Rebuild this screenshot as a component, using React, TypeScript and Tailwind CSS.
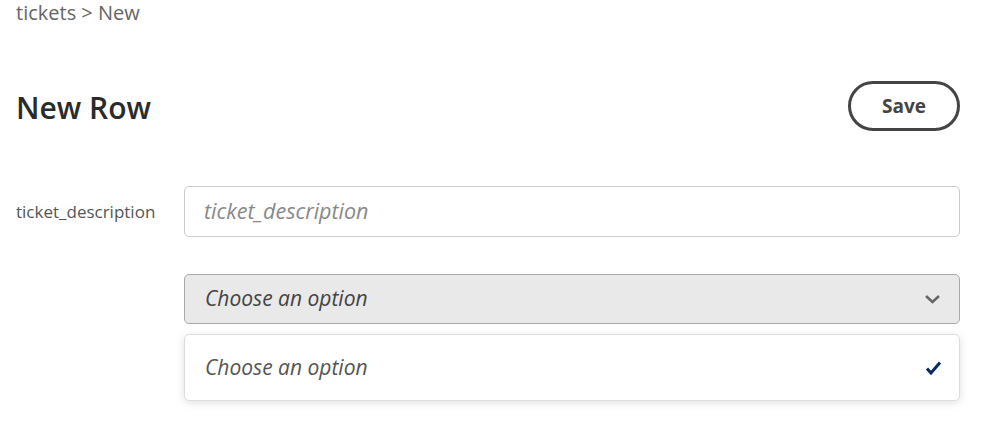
import React from "react";

export default function App() {
  return (
    <div className="w-[986px] h-[432px] bg-white overflow-hidden" style={{ fontFamily: "'Open Sans', sans-serif" }}>
      <div className="pl-4 pr-[26px]">
        <div className="text-[20px] leading-[26px] text-[#666]">tickets &gt; New</div>
        <div className="mt-[55px] flex items-center justify-between h-[50px]">
          <h1 className="pt-[4px] text-[30px] font-semibold text-[#2b2b2b] leading-none">New Row</h1>
          <button className="w-[112px] h-[50px] rounded-full border-[3px] border-[#444] text-[19px] font-bold text-[#444]">Save</button>
        </div>
        <div className="mt-[55px] flex items-center">
          <label className="w-[168px] text-[17px] text-[#555]">ticket_description</label>
          <div className="flex-1 h-[51px] border border-[#ccc] rounded-[5px] flex items-center px-[19px]">
            <span className="italic text-[21.5px] text-[#888]">ticket_description</span>
          </div>
        </div>
        <div className="mt-[37px] ml-[168px] h-[50px] bg-[#e9e9e9] border border-[#aaa] rounded-[5px] flex items-center justify-between pl-[20px] pr-[18px]">
          <span className="italic text-[21px] text-[#444]">Choose an option</span>
          <svg width="17" height="10" viewBox="0 0 17 10" fill="none">
            <path d="M2 2l6.5 6 6.5-6" stroke="#666" strokeWidth="2.5" />
          </svg>
        </div>
        <div className="mt-[10px] ml-[168px] h-[67px] bg-white border border-[#ddd] rounded-[5px] shadow-[0_2px_8px_rgba(0,0,0,0.12)] flex items-center justify-between pl-[20px] pr-[17px]">
          <span className="italic text-[21px] text-[#555]">Choose an option</span>
          <svg width="17" height="14" viewBox="0 0 17 14" fill="none">
            <path d="M2 7.5l4 4.5 9-10.5" stroke="#0b2a5b" strokeWidth="3" />
          </svg>
        </div>
      </div>
    </div>
  );
}
